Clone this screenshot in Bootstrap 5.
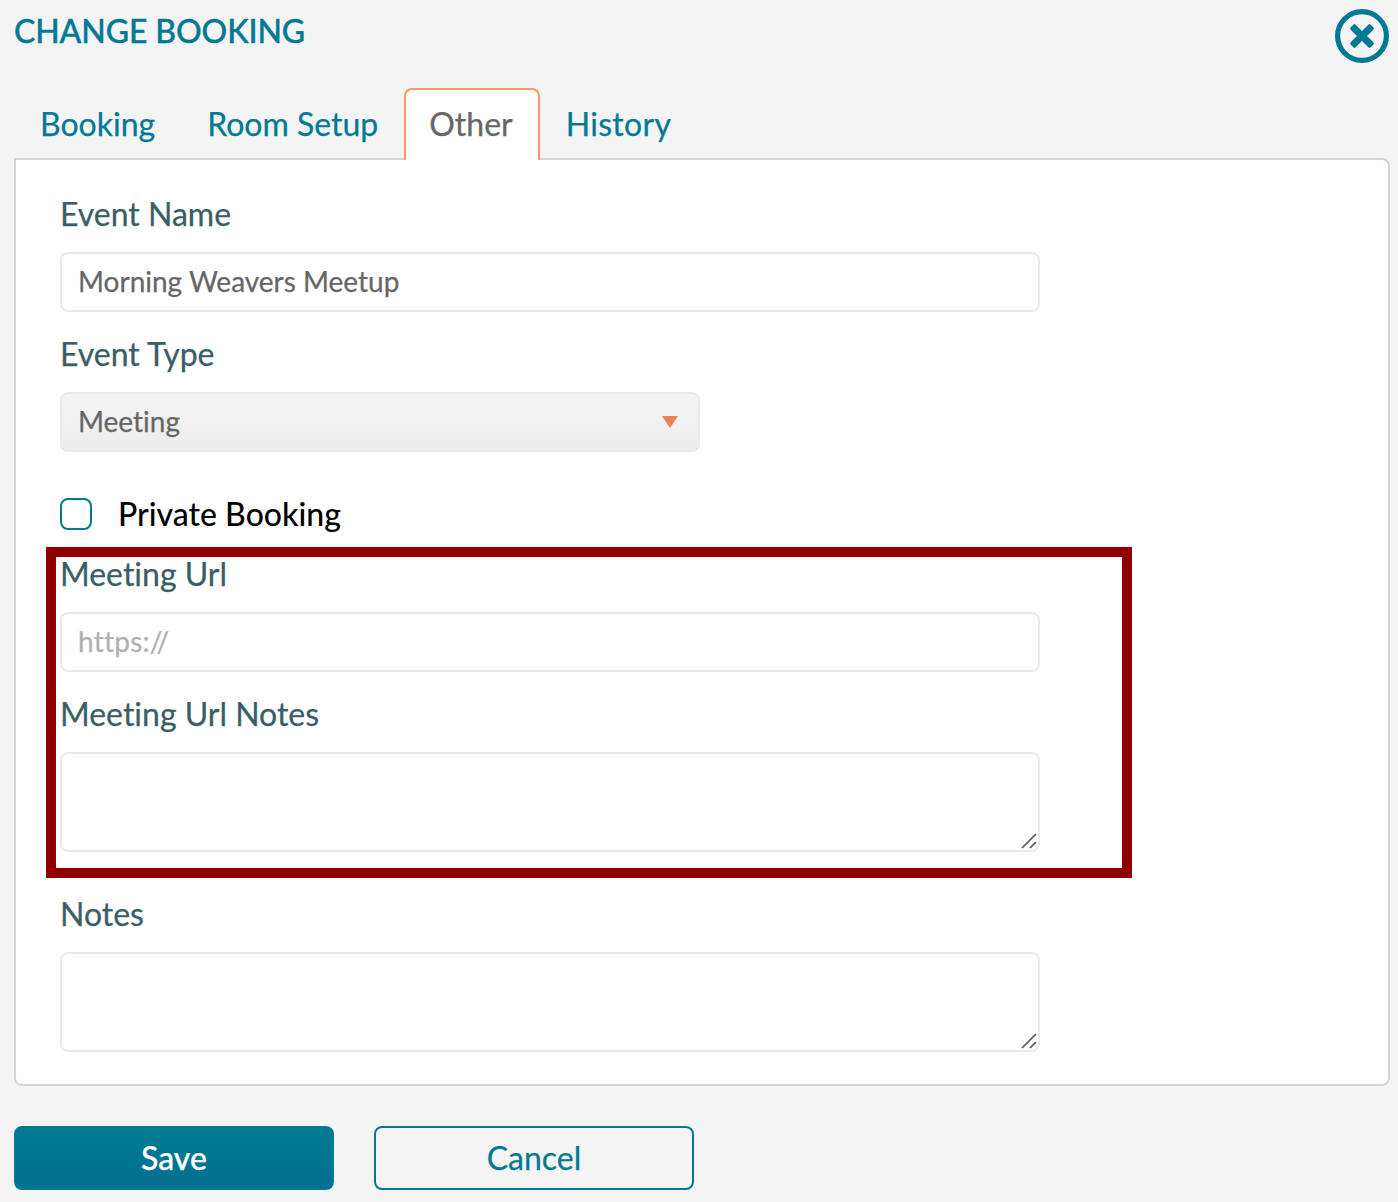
<!DOCTYPE html>
<html lang="en">
<head>
<meta charset="utf-8">
<meta name="viewport" content="width=device-width, initial-scale=1">
<title>Change Booking</title>
<link href="https://cdn.jsdelivr.net/npm/bootstrap@5.3.0/dist/css/bootstrap.min.css" rel="stylesheet">
<style>
:root { --teal: #007a93; }
body { background: #f4f4f4; font-family: Lato, sans-serif; font-size: 32px; line-height: 40px; color: #666; height: 1202px; overflow: hidden; font-variant-ligatures: none; -webkit-text-stroke: .25px currentColor; }
.dialog-shell { padding: 9px 8px 12px 14px; }
.dialog-head { height: 79px; }
.dialog-title { font-size: 32px; line-height: 40px; font-weight: 500; color: var(--teal); letter-spacing: -.1px; margin-top: 2px; -webkit-text-stroke: .4px currentColor; }
.close-btn { width: 54px; height: 54px; color: var(--teal); line-height: 0; margin-right: 1px; }
.nav-tabs { --bs-nav-tabs-border-width: 0; }
.nav-tabs .nav-link { height: 72px; padding: 14px 24px 0 24px; border: 2px solid transparent; border-bottom: 0; border-radius: 8px 8px 0 0; color: var(--teal); line-height: 40px; margin-bottom: -2px; position: relative; }
.nav-tabs .nav-link.active { border-color: #f79767; color: #666; background: #fff; z-index: 1; padding-left: 23px; padding-right: 25px; }
.history-tab { letter-spacing: .3px; }
.booking-panel { background: #fff; border: 2px solid #d3d3d3; border-radius: 0 8px 8px 8px; padding: 34px 44px 32px; height: 928px; }
.field-label { display: block; color: #3a5e66; margin-bottom: 18px; line-height: 40px; }
.field-block { margin-bottom: 22px; }
.form-control, .form-select { font-size: 28px; line-height: 36px; width: 980px; height: 60px; padding: 9px 16px 11px; border: 2px solid #eaeaea; border-radius: 8px; color: #666; background-color: #fff; font-variant-ligatures: none; font-feature-settings: "liga" 0, "clig" 0; }
.form-control::placeholder { color: #b0b0b0; letter-spacing: .25px; }
.form-select { width: 640px; background: linear-gradient(#f3f3f3, #ededed); color: #666; }
.select-wrap { width: 640px; }
.select-wrap svg { right: 22px; top: 24px; }
.area-wrap { width: 980px; height: 100px; }
.area-wrap textarea { height: 100px; resize: none; }
.area-wrap svg { right: 3px; bottom: 3px; }
.form-check-input.private-check { width: 32px; height: 32px; border: 2px solid var(--teal); border-radius: 8px; background-color: #fff; margin: 0; }
.private-row { height: 40px; margin-top: 42px; gap: 26px; color: #000; font-weight: 500; -webkit-text-stroke: 0; }
.url-highlight { width: 1086px; height: 331px; border: 10px solid #900000; margin: 13px 0 16px -14px; padding: 0 4px; }
.url-highlight .field-block:first-child { margin-top: -3px; }
.dialog-actions { gap: 40px; margin-top: 40px; }
.action-btn { width: 320px; height: 64px; font-size: 32px; line-height: 40px; padding: 0; border: 2px solid var(--teal); border-radius: 8px; }
.save-btn { background: linear-gradient(#007a93, #03708f); color: #fff; font-weight: 500; }
.cancel-btn { color: var(--teal); -webkit-text-stroke: .25px currentColor; }
</style>
</head>
<body>
<main class="dialog-shell">
  <header class="dialog-head d-flex justify-content-between align-items-start">
    <h1 class="dialog-title mb-0">CHANGE BOOKING</h1>
    <button class="close-btn btn p-0 border-0" type="button" aria-label="Close">
      <svg width="54" height="54" viewBox="0 0 54 54"><circle cx="27" cy="27" r="24.4" fill="none" stroke="currentColor" stroke-width="5.2"/><g fill="currentColor"><rect x="12.9" y="23.5" width="28.2" height="7" rx="1.6" transform="rotate(45 27 27)"/><rect x="12.9" y="23.5" width="28.2" height="7" rx="1.6" transform="rotate(-45 27 27)"/></g></svg>
    </button>
  </header>
  <ul class="nav nav-tabs flex-nowrap">
    <li class="nav-item"><a class="nav-link" href="#">Booking</a></li>
    <li class="nav-item"><a class="nav-link" href="#">Room Setup</a></li>
    <li class="nav-item"><a class="nav-link active" href="#">Other</a></li>
    <li class="nav-item"><a class="nav-link history-tab" href="#">History</a></li>
  </ul>
  <form class="booking-panel">
    <div class="field-block">
      <label class="field-label" for="eventName">Event Name</label>
      <input class="form-control" id="eventName" type="text" value="Morning Weavers Meetup">
    </div>
    <div>
      <label class="field-label" for="eventType">Event Type</label>
      <div class="select-wrap position-relative">
        <select class="form-select" id="eventType"><option>Meeting</option></select>
        <svg class="position-absolute" width="16" height="12" viewBox="0 0 16 12"><path d="M0 0H16L8 12Z" fill="#ed8151"/></svg>
      </div>
    </div>
    <div class="private-row d-flex align-items-center">
      <input class="form-check-input private-check" id="privateBooking" type="checkbox">
      <label for="privateBooking">Private Booking</label>
    </div>
    <section class="url-highlight">
      <div class="field-block">
        <label class="field-label" for="meetingUrl">Meeting Url</label>
        <input class="form-control" id="meetingUrl" type="text" placeholder="https://">
      </div>
      <div>
        <label class="field-label" for="urlNotes">Meeting Url Notes</label>
        <div class="area-wrap position-relative">
          <textarea class="form-control" id="urlNotes"></textarea>
          <svg class="position-absolute" width="16" height="16" viewBox="0 0 16 16" fill="none" stroke="#555" stroke-width="1.7"><path d="M1 15 15 1M9 15l6-6"/></svg>
        </div>
      </div>
    </section>
    <div>
      <label class="field-label" for="notes">Notes</label>
      <div class="area-wrap position-relative">
        <textarea class="form-control" id="notes"></textarea>
        <svg class="position-absolute" width="16" height="16" viewBox="0 0 16 16" fill="none" stroke="#555" stroke-width="1.7"><path d="M1 15 15 1M9 15l6-6"/></svg>
      </div>
    </div>
  </form>
  <div class="dialog-actions d-flex">
    <button class="btn action-btn save-btn" type="button">Save</button>
    <button class="btn action-btn cancel-btn" type="button">Cancel</button>
  </div>
</main>
<script src="https://cdn.jsdelivr.net/npm/bootstrap@5.3.0/dist/js/bootstrap.bundle.min.js"></script>
</body>
</html>
